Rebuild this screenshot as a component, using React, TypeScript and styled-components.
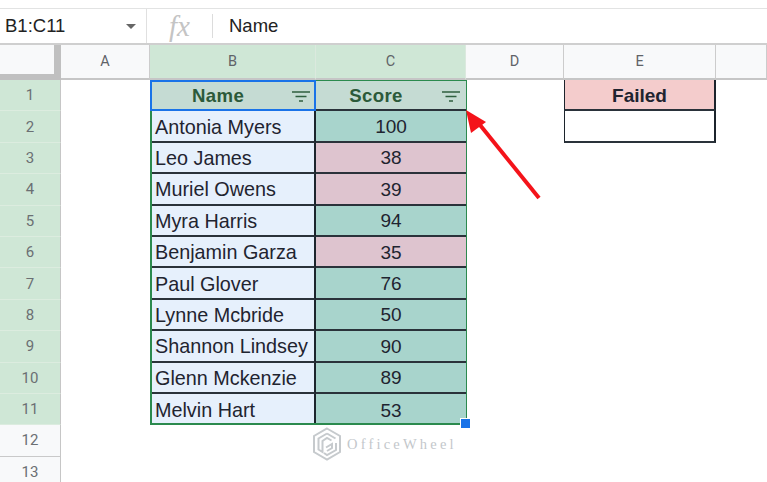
import React from "react";
import styled, { createGlobalStyle } from "styled-components";

const Global = createGlobalStyle`
  html, body { margin: 0; padding: 0; background: #fff; }
  body { font-family: "Liberation Sans", Arial, sans-serif; }
`;

const Page = styled.div`
  position: relative;
  width: 767px;
  height: 482px;
  overflow: hidden;
  background: #fff;
  padding-top: 8px;
  box-sizing: border-box;
`;

const FormulaBar = styled.div`
  display: flex;
  align-items: center;
  height: 37px;
  box-sizing: border-box;
  border-top: 1px solid #e2e3e3;
  border-bottom: 2px solid #cfcfcf;
`;

const NameBox = styled.div`
  width: 147px;
  box-sizing: border-box;
  display: flex;
  align-items: center;
  justify-content: space-between;
  padding: 0 10px 0 5px;
  height: 100%;
  border-right: 1px solid #e0e0e0;
  font-size: 18.5px;
  color: #222;
`;

const Caret = styled.span`
  width: 0;
  height: 0;
  border-left: 5px solid transparent;
  border-right: 5px solid transparent;
  border-top: 5px solid #666;
`;

const Fx = styled.span`
  width: 65px;
  text-align: center;
  font-family: "Liberation Serif", serif;
  font-style: italic;
  font-size: 29px;
  color: #c4c4c4;
`;

const Divider = styled.span`
  width: 1px;
  height: 24px;
  background: #dcdcdc;
  margin-right: 16px;
`;

const FormulaText = styled.span`
  font-size: 18.5px;
  color: #222;
`;

const Sheet = styled.div`
  position: relative;
  display: grid;
  grid-template-columns: 61px 89px 166px 150px 98px 152px 51px;
  grid-template-rows: 35px;
  grid-auto-rows: 31.4px;
`;

const Corner = styled.div`
  box-sizing: border-box;
  background: #f8f9fa;
  border-right: 7px solid #c0c0c0;
  border-bottom: 6px solid #c0c0c0;
`;

const ColHead = styled.div<{ $on?: boolean }>`
  box-sizing: border-box;
  display: flex;
  align-items: center;
  justify-content: center;
  font-family: Roboto, sans-serif;
  font-size: 14.5px;
  color: #5f6368;
  background: ${(p) => (p.$on ? "#cfe7d6" : "#f8f9fa")};
  border-right: 1px solid ${(p) => (p.$on ? "#dbe9de" : "#cccccc")};
  border-bottom: 2px solid #c6c6c6;
`;

const RowHead = styled.div<{ $on?: boolean }>`
  box-sizing: border-box;
  display: flex;
  align-items: center;
  justify-content: center;
  font-family: Roboto, sans-serif;
  font-size: 15px;
  color: #6b6f73;
  background: ${(p) => (p.$on ? "#cfe7d6" : "#f8f9fa")};
  border-right: 1px solid #c6c6c6;
  border-bottom: 1px solid ${(p) => (p.$on ? "#dcecdf" : "#c9c9c9")};
`;

const Empty = styled.div`
  background: #fff;
`;

type Tone = "name" | "pass" | "fail" | "failedHead" | "blank";

const tones: Record<Tone, string> = {
  name: "#e6f0fc",
  pass: "#a8d4cc",
  fail: "#dec4cf",
  failedHead: "#f4cccc",
  blank: "#fff",
};

const Cell = styled.div<{ $tone: Tone; $left?: boolean; $boxed?: boolean; $edge?: boolean; $bold?: boolean }>`
  position: relative;
  box-sizing: border-box;
  display: flex;
  align-items: center;
  justify-content: ${(p) => (p.$left ? "flex-start" : "center")};
  padding-left: ${(p) => (p.$left ? "5px" : "0")};
  padding-top: 2px;
  background: ${(p) => tones[p.$tone]};
  color: #1f2430;
  font-size: ${(p) => (p.$left ? "19.8px" : "19px")};
  font-weight: ${(p) => (p.$bold ? 700 : 400)};
  white-space: nowrap;
  border-bottom: ${(p) => (p.$edge ? "0" : "2px solid #2a323a")};
  border-right: ${(p) => (p.$boxed || p.$left ? "2px solid #1c242c" : "0")};
  border-left: ${(p) => (p.$boxed ? "1px solid #1c242c" : "0")};
`;

const HeadCell = styled.div`
  position: relative;
  box-sizing: border-box;
  display: flex;
  align-items: center;
  justify-content: center;
  padding: 2px 30px 0 0;
  background: #c5dbd3;
  color: #2c5a3a;
  font-size: 18.6px;
  font-weight: 700;
  letter-spacing: 0.4px;
  border-bottom: 2px solid #2a323a;
`;

const FilterIcon = styled.svg`
  position: absolute;
  right: 6px;
  top: 10px;
  width: 18px;
  height: 13px;
`;

const Selection = styled.div`
  position: absolute;
  left: 150px;
  top: 35px;
  width: 317px;
  height: 345px;
  box-sizing: border-box;
  border: 1px solid #2b8a4e;
  border-left-width: 2px;
  border-bottom-width: 2px;
  pointer-events: none;
`;

const ActiveCell = styled.div`
  position: absolute;
  left: 150px;
  top: 35px;
  width: 166px;
  height: 31px;
  box-sizing: border-box;
  border: 2px solid #1a73e8;
  pointer-events: none;
`;

const Handle = styled.div`
  position: absolute;
  left: 460px;
  top: 373px;
  width: 11px;
  height: 11px;
  box-sizing: border-box;
  background: #1a73e8;
  border: 1px solid #fff;
`;

const Arrow = styled.svg`
  position: absolute;
  left: 460px;
  top: 104px;
  width: 90px;
  height: 104px;
`;

const Watermark = styled.div`
  position: absolute;
  left: 312px;
  top: 427px;
  display: flex;
  align-items: center;
  gap: 5px;
  font-family: "Liberation Serif", serif;
  font-size: 14.5px;
  letter-spacing: 3.2px;
  color: #c3c7cb;
`;

const Filter = () => (
  <FilterIcon viewBox="0 0 18 13">
    <path d="M0 2h18M3.5 6.5h11M7 11h4" stroke="#2f5f3f" strokeWidth="1.3" fill="none" />
  </FilterIcon>
);

const rows: [string, number, Tone][] = [
  ["Antonia Myers", 100, "pass"],
  ["Leo James", 38, "fail"],
  ["Muriel Owens", 39, "fail"],
  ["Myra Harris", 94, "pass"],
  ["Benjamin Garza", 35, "fail"],
  ["Paul Glover", 76, "pass"],
  ["Lynne Mcbride", 50, "pass"],
  ["Shannon Lindsey", 90, "pass"],
  ["Glenn Mckenzie", 89, "pass"],
  ["Melvin Hart", 53, "pass"],
];

export default function App() {
  return (
    <Page>
      <Global />
      <FormulaBar>
        <NameBox>
          B1:C11
          <Caret />
        </NameBox>
        <Fx>fx</Fx>
        <Divider />
        <FormulaText>Name</FormulaText>
      </FormulaBar>
      <Sheet>
        <Corner />
        <ColHead>A</ColHead>
        <ColHead $on>B</ColHead>
        <ColHead $on>C</ColHead>
        <ColHead>D</ColHead>
        <ColHead>E</ColHead>
        <ColHead />

        <RowHead $on>1</RowHead>
        <Empty />
        <HeadCell>
          Name
          <Filter />
        </HeadCell>
        <HeadCell>
          Score
          <Filter />
        </HeadCell>
        <Empty />
        <Cell $tone="failedHead" $boxed $bold>
          Failed
        </Cell>
        <Empty />

        {rows.map(([name, score, tone], i) => (
          <React.Fragment key={name}>
            <RowHead $on>{i + 2}</RowHead>
            <Empty />
            <Cell $tone="name" $left $edge={i === 9}>
              {name}
            </Cell>
            <Cell $tone={tone} $edge={i === 9}>
              {score}
            </Cell>
            <Empty />
            {i === 0 ? <Cell $tone="blank" $boxed /> : <Empty />}
            <Empty />
          </React.Fragment>
        ))}

        <RowHead>12</RowHead>
        <Empty /><Empty /><Empty /><Empty /><Empty /><Empty />
        <RowHead>13</RowHead>

        <Selection />
        <ActiveCell />
        <Handle />
      </Sheet>
      <Arrow viewBox="0 0 90 104">
        <path d="M79 94 L16 16" stroke="#f4131a" strokeWidth="4" fill="none" />
        <path d="M6 6 L26 18 L11 29 Z" fill="#f4131a" />
      </Arrow>
      <Watermark>
        <svg width="30" height="34" viewBox="0 0 30 34" fill="none" stroke="#c6cacd" strokeWidth="2">
          <path d="M15 1.5 L28 9 V25 L15 32.5 L2 25 V9 Z" />
          <path d="M15 6.5 L23.5 11.5 M15 6.5 L6.5 11.5 V22.5 L10.5 25 V14 L15 11 L19.5 13.5" />
          <path d="M24 16 V23 L15 28 L12 26 M14 20.5 L20 17 V21 L15 24" />
        </svg>
        OfficeWheel
      </Watermark>
    </Page>
  );
}
